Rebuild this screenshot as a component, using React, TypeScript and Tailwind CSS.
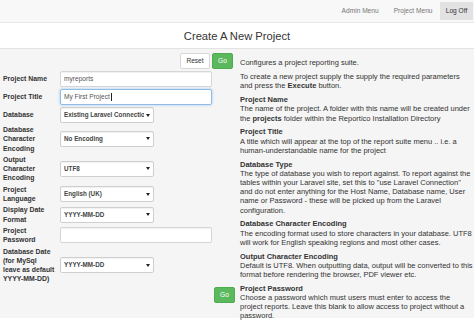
import React from "react";

type Row = {
  label: string[];
  kind: "input" | "select";
  value: string;
  focused?: boolean;
};

const rows: Row[] = [
  { label: ["Project Name"], kind: "input", value: "myreports" },
  { label: ["Project Title"], kind: "input", value: "My First Project", focused: true },
  { label: ["Database"], kind: "select", value: "Existing Laravel Connection" },
  { label: ["Database", "Character", "Encoding"], kind: "select", value: "No Encoding" },
  { label: ["Output", "Character", "Encoding"], kind: "select", value: "UTF8" },
  { label: ["Project", "Language"], kind: "select", value: "English (UK)" },
  { label: ["Display Date", "Format"], kind: "select", value: "YYYY-MM-DD" },
  { label: ["Project", "Password"], kind: "input", value: "" },
  {
    label: ["Database Date", "(for MySql", "leave as default", "YYYY-MM-DD)"],
    kind: "select",
    value: "YYYY-MM-DD",
  },
];

const Caret = () => (
  <svg width="4" height="3" viewBox="0 0 4 3" className="shrink-0">
    <path d="M0 0 L4 0 L2 3 Z" fill="#222" />
  </svg>
);

const Field = ({ row }: { row: Row }) => {
  if (row.kind === "select") {
    return (
      <div className="flex h-[16px] w-[94px] items-center rounded-[2px] border border-[#cfcfcf] bg-white pl-[3px] pr-[3px] shadow-[inset_0_1px_1px_rgba(0,0,0,0.06)]">
        <span className="flex-1 overflow-hidden whitespace-nowrap text-[6.3px] font-bold text-[#444]">
          {row.value}
        </span>
        <span className="ml-[2px]">
          <Caret />
        </span>
      </div>
    );
  }
  return (
    <div
      className={`flex h-[16px] w-[152px] items-center rounded-[2px] border bg-white pl-[3px] ${
        row.focused
          ? "border-[#8fbbe6] shadow-[0_0_3px_rgba(102,175,233,0.6)]"
          : "border-[#d6d6d6] shadow-[inset_0_1px_1px_rgba(0,0,0,0.06)]"
      }`}
    >
      <span className="whitespace-nowrap text-[6.6px] text-[#555]">{row.value}</span>
      {row.focused && <span className="ml-px h-[8px] w-px bg-[#222]" />}
    </div>
  );
};

const Btn = ({ children, green }: { children: React.ReactNode; green?: boolean }) => (
  <button
    className={`flex h-[16px] items-center justify-center rounded-[2px] border text-[6.6px] ${
      green
        ? "w-[21px] border-[#4cae4c] bg-[#5cb85c] text-white"
        : "w-[30px] border-[#d8d8d8] bg-white text-[#333]"
    }`}
  >
    {children}
  </button>
);

const help: React.ReactNode[][] = [
  [<>Configures a project reporting suite.</>],
  [
    <>To create a new project supply the supply the required parameters</>,
    <>
      and press the <b>Execute</b> button.
    </>,
  ],
  [
    <b>Project Name</b>,
    <>The name of the project. A folder with this name will be created under</>,
    <>
      the <b>projects</b> folder within the Reportico Installation Directory
    </>,
  ],
  [
    <b>Project Title</b>,
    <>A title which will appear at the top of the report suite menu .. i.e. a</>,
    <>human-understandable name for the project</>,
  ],
  [
    <b>Database Type</b>,
    <>The type of database you wish to report against. To report against the</>,
    <>tables within your Laravel site, set this to "use Laravel Connection"</>,
    <>and do not enter anything for the Host Name, Database name, User</>,
    <>name or Password - these will be picked up from the Laravel</>,
    <>configuration.</>,
  ],
  [
    <b>Database Character Encoding</b>,
    <>The encoding format used to store characters in your database. UTF8</>,
    <>will work for English speaking regions and most other cases.</>,
  ],
  [
    <b>Output Character Encoding</b>,
    <>Default is UTF8. When outputting data, output will be converted to this</>,
    <>format before rendering the browser, PDF viewer etc.</>,
  ],
  [
    <b>Project Password</b>,
    <>Choose a password which must users must enter to access the</>,
    <>project reports. Leave this blank to allow access to project without a</>,
    <>password.</>,
  ],
];

export default function App() {
  return (
    <div className="h-[323px] w-[474px] overflow-hidden bg-white font-['Liberation_Sans',Arial,sans-serif] text-[#333]">
      {/* top nav */}
      <nav className="box-border flex h-[23px] items-center justify-end border-b border-[#e7e7e7] bg-[#f8f8f8] pr-px text-[6.6px] text-[#777]">
        <span className="px-[7.5px]">Admin Menu</span>
        <span className="px-[7.5px]">Project Menu</span>
        <span className="flex h-[18px] w-[33px] items-center justify-center bg-[#e2e2e2] text-[#333]">
          Log Off
        </span>
      </nav>

      <h3 className="border-b border-[#e3e3e3] pb-[5px] pt-[7px] text-center text-[11.2px] leading-[13px] text-[#333]">
        Create A New Project
      </h3>

      <div className="flex h-[269px] bg-[#f5f5f5]">
        {/* form column */}
        <div className="w-[237px] shrink-0 pl-[3px] pt-[4px]">
          <div className="flex justify-end gap-[2px] pr-[4px]">
            <Btn>Reset</Btn>
            <Btn green>Go</Btn>
          </div>
          <div className="mt-px">
            {rows.map((row, i) => (
              <div key={i} className="flex min-h-[18px] items-center py-px">
                <div className="w-[57px] shrink-0 whitespace-nowrap text-[6.9px] font-bold leading-[9.3px] text-[#333]">
                  {row.label.map((l, j) => (
                    <div key={j}>{l}</div>
                  ))}
                </div>
                <Field row={row} />
              </div>
            ))}
          </div>
          <div className="mt-[2px] flex justify-end pr-[2px]">
            <Btn green>Go</Btn>
          </div>
        </div>

        {/* help column */}
        <div className="flex flex-col gap-[4.6px] pl-[3px] pt-[9.4px] text-[7.5px] leading-[9.2px] text-[#333]">
          {help.map((p, i) => (
            <div key={i} className="whitespace-nowrap">
              {p.map((line, j) => (
                <div key={j}>{line}</div>
              ))}
            </div>
          ))}
        </div>
      </div>
    </div>
  );
}
